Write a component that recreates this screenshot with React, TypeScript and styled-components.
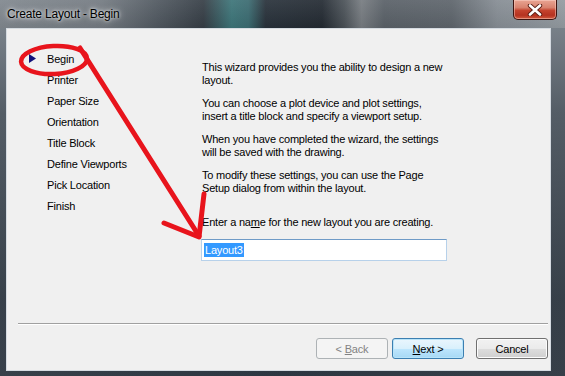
import React from "react";
import styled, { createGlobalStyle } from "styled-components";

const GlobalStyle = createGlobalStyle`
  html, body { margin: 0; padding: 0; }
  body {
    width: 565px;
    height: 376px;
    overflow: hidden;
    background: #28323d;
  }
  * { box-sizing: border-box; }
`;

const Window = styled.div`
  position: relative;
  width: 565px;
  height: 376px;
  display: flex;
  flex-direction: column;
  background:
    linear-gradient(to bottom, rgba(140, 148, 156, 0.9) 0%, rgba(95, 104, 113, 0.7) 30%, rgba(40, 50, 61, 0.2) 80%),
    linear-gradient(90deg, #3b444d 0%, #2e3843 50%, #3a434c 100%);
  font-family: "Liberation Sans", Arial, sans-serif;
`;

const TitleBar = styled.div`
  height: 28px;
  flex: none;
  display: flex;
  align-items: flex-start;
  padding-left: 7px;
  background:
    linear-gradient(to bottom, rgba(255, 255, 255, 0.08), rgba(0, 0, 0, 0.05)),
    linear-gradient(
      90deg,
      #80878e 0%,
      #737a81 18%,
      #4f575f 28%,
      #353d45 36%,
      #3c7478 41%,
      #3a6a70 44%,
      #28313a 47%,
      #232a32 57%,
      #4b5258 61%,
      #767b80 64%,
      #596067 68%,
      #5d646b 80%,
      #858c93 88%,
      #939aa0 100%
    );
`;

const Title = styled.span`
  font-family: "Liberation Sans", Arial, sans-serif;
  font-size: 12px;
  letter-spacing: -0.2px;
  line-height: 28px;
  color: #000;
  text-shadow: 0 0 6px rgba(255, 255, 255, 0.9), 0 0 3px rgba(255, 255, 255, 0.8);
`;

const CloseButton = styled.div`
  margin-left: auto;
  margin-right: 8px;
  width: 44px;
  height: 20px;
  display: flex;
  align-items: center;
  justify-content: center;
  border: 1px solid #3d1410;
  border-top: none;
  border-radius: 0 0 5px 5px;
  background: linear-gradient(to bottom, #e9a593 0%, #d8826e 40%, #c4432e 55%, #b53220 80%, #d15a3e 100%);
  box-shadow: inset 0 0 0 1px rgba(255, 220, 210, 0.45);
`;

const Client = styled.div`
  flex: 1;
  margin: 0 14px 5px 6px;
  background: #f0f0f0;
  border: 1px solid #d5dbe1;
  display: flex;
  flex-direction: column;
  font-size: 11px;
  letter-spacing: -0.2px;
  color: #000;
`;

const Main = styled.div`
  flex: 1;
  display: flex;
`;

const Nav = styled.ul`
  width: 195px;
  flex: none;
  list-style: none;
  margin: 0;
  padding: 19px 0 0 22px;
`;

const NavItem = styled.li`
  height: 21px;
  display: flex;
  align-items: center;
  gap: 11px;
`;

const Marker = styled.span<{ $on?: boolean }>`
  width: 7px;
  height: 9px;
  flex: none;
  clip-path: polygon(0 0, 100% 50%, 0 100%);
  background: ${(p) => (p.$on ? "#10107a" : "transparent")};
`;

const Panel = styled.div`
  flex: 1;
  padding-top: 32px;
  display: flex;
  flex-direction: column;
`;

const Para = styled.p`
  margin: 0 0 10px 0;
  line-height: 13px;
`;

const Label = styled.p`
  margin: 11px 0 0 0;
  line-height: 13px;
`;

const NameInput = styled.div`
  margin: 10px 0 0 -1px;
  width: 246px;
  height: 22px;
  background: #fff;
  border: 1px solid #b7d1ea;
  border-top-color: #6f9bc7;
  display: flex;
  align-items: center;
  padding-left: 2px;
`;

const Selected = styled.span`
  background: #3399ff;
  color: #fff;
  line-height: 14px;
  padding: 0 1px;
`;

const Separator = styled.div`
  height: 1px;
  margin: 0 2px 0 11px;
  background: #a0a0a0;
  border-bottom: 1px solid #fff;
  box-sizing: content-box;
`;

const ButtonRow = styled.div`
  display: flex;
  justify-content: flex-end;
  padding: 13px 2px 11px 0;
`;

const Button = styled.div<{ $kind?: "default" | "disabled" | "normal"; $gap?: number }>`
  width: 72px;
  height: 21px;
  margin-right: ${(p) => p.$gap ?? 0}px;
  display: flex;
  align-items: center;
  justify-content: center;
  border-radius: 3px;
  border: 1px solid
    ${(p) => (p.$kind === "default" ? "#3c7fb1" : p.$kind === "disabled" ? "#adb2b5" : "#707070")};
  color: ${(p) => (p.$kind === "disabled" ? "#838383" : "#000")};
  background: ${(p) =>
    p.$kind === "default"
      ? "linear-gradient(to bottom, #eaf6fd 0%, #d9f0fc 50%, #bee6fd 51%, #a7d9f5 100%)"
      : p.$kind === "disabled"
      ? "#f4f4f4"
      : "linear-gradient(to bottom, #f2f2f2 0%, #ebebeb 50%, #dddddd 51%, #cfcfcf 100%)"};
  box-shadow: ${(p) =>
    p.$kind === "disabled" ? "none" : p.$kind === "default" ? "inset 0 0 0 1px #b9e4f9" : "inset 0 0 0 1px #fcfcfc"};
`;

const Overlay = styled.svg`
  position: absolute;
  left: 0;
  top: 0;
  pointer-events: none;
`;

const steps = ["Begin", "Printer", "Paper Size", "Orientation", "Title Block", "Define Viewports", "Pick Location", "Finish"];

export default function App() {
  return (
    <>
      <GlobalStyle />
      <Window>
        <TitleBar>
          <Title>Create Layout - Begin</Title>
          <CloseButton>
            <svg width="16" height="12" viewBox="0 0 16 12">
              <path d="M3 1.5 L13 10.5 M13 1.5 L3 10.5" stroke="#5a1e14" strokeWidth="4.4" strokeLinecap="round" />
              <path d="M3 1.5 L13 10.5 M13 1.5 L3 10.5" stroke="#ffffff" strokeWidth="2.6" strokeLinecap="round" />
            </svg>
          </CloseButton>
        </TitleBar>
        <Client>
          <Main>
            <Nav>
              {steps.map((s, i) => (
                <NavItem key={s}>
                  <Marker $on={i === 0} />
                  {s}
                </NavItem>
              ))}
            </Nav>
            <Panel>
              <Para>
                This wizard provides you the ability to design a new
                <br />
                layout.
              </Para>
              <Para>
                You can choose a plot device and plot settings,
                <br />
                insert a title block and specify a viewport setup.
              </Para>
              <Para>
                When you have completed the wizard, the settings
                <br />
                will be saved with the drawing.
              </Para>
              <Para>
                To modify these settings, you can use the Page
                <br />
                Setup dialog from within the layout.
              </Para>
              <Label>
                Enter a na<u>m</u>e for the new layout you are creating.
              </Label>
              <NameInput>
                <Selected>Layout3</Selected>
              </NameInput>
            </Panel>
          </Main>
          <Separator />
          <ButtonRow>
            <Button $kind="disabled" $gap={4}>
              &lt;&nbsp;<u>B</u>ack
            </Button>
            <Button $kind="default" $gap={12}>
              <u>N</u>ext &gt;
            </Button>
            <Button $kind="normal">Cancel</Button>
          </ButtonRow>
        </Client>
        <Overlay width="565" height="376" viewBox="0 0 565 376">
          <g fill="none" stroke="#e8141c" strokeLinecap="round" strokeLinejoin="round">
            <ellipse cx="54" cy="60" rx="33" ry="14" strokeWidth="4.5" transform="rotate(-3 54 60)" />
            <path d="M80 48 L199 236" strokeWidth="5" />
            <path d="M164 223 L199 237 L204 194" strokeWidth="5" />
          </g>
        </Overlay>
      </Window>
    </>
  );
}
